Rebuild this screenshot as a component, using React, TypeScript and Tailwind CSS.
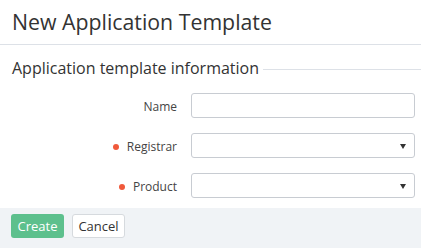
import React from "react";

const Caret = () => (
  <svg width="6" height="5" viewBox="0 0 6 5" className="absolute right-[8px] top-[10px]">
    <path d="M0 0h6L3 5z" fill="#333" />
  </svg>
);

const Field = ({ label, required, select }: { label: string; required?: boolean; select?: boolean }) => (
  <div className="flex items-center h-[25px]">
    <div className="w-[177px] flex justify-end items-center text-[12px] text-[#444] pt-[2px]">
      {required && <span className="w-[6px] h-[6px] rounded-full bg-[#f0593b] mr-[8px]" />}
      <span>{label}</span>
    </div>
    <div className="ml-[14px] w-[224px] h-[25px] relative border border-[#c8ccd2] rounded-[3px] bg-white">
      {select && <Caret />}
    </div>
  </div>
);

export default function App() {
  return (
    <div className="w-[421px] h-[248px] bg-white flex flex-col" style={{ fontFamily: '"Open Sans", sans-serif' }}>
      <div className="h-[45px] border-b border-[#dde1e7] flex items-center px-[12px]">
        <h1 className="text-[21.3px] text-[#333] leading-none mt-[-1px]">New Application Template</h1>
      </div>
      <div className="flex items-center pl-[12px] mt-[13px] h-[20px]">
        <span className="text-[16px] text-[#333] leading-none whitespace-nowrap">Application template information</span>
        <div className="flex-1 h-px bg-[#dde1e7] ml-[4px] mt-[2px]" />
      </div>
      <div className="flex flex-col gap-[15px] mt-[15px]">
        <Field label="Name" />
        <Field label="Registrar" required select />
        <Field label="Product" required select />
      </div>
      <div className="mt-auto h-[40px] bg-[#f0f3f6] flex items-start pt-[6px] pl-[11px] gap-[8px]">
        <button className="h-[24px] w-[53px] rounded-[3px] bg-[#5dc08d] text-white text-[13px] leading-none">Create</button>
        <button className="h-[24px] w-[53px] rounded-[3px] bg-white border border-[#d6dade] text-[#333] text-[13px] leading-none">Cancel</button>
      </div>
    </div>
  );
}
